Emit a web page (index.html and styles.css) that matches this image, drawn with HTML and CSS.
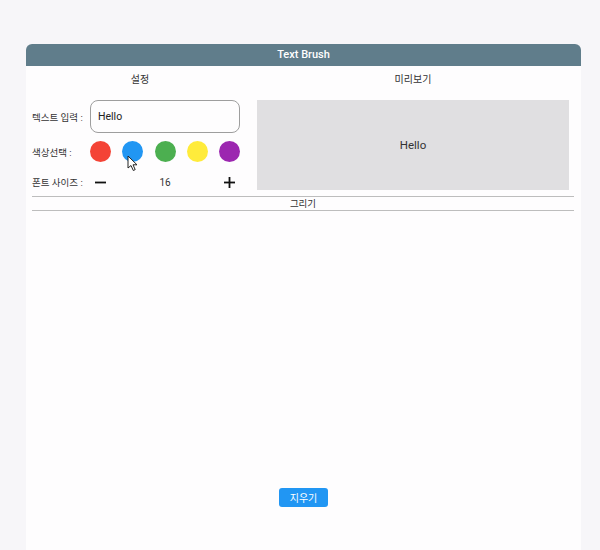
FILE: index.html
```html
<!DOCTYPE html>
<html lang="ko">
<head>
  <meta charset="UTF-8">
  <title>Text Brush</title>
  <link rel="stylesheet" href="styles.css">
</head>
<body>
  <div class="window">
    <header class="titlebar">Text Brush</header>
    <div class="top">
      <div class="col settings">
        <div class="col-title">설정</div>
        <div class="row input-row">
          <span class="label">텍스트 입력 :</span>
          <div class="text-input">Hello</div>
        </div>
        <div class="row color-row">
          <span class="label">색상선택 :</span>
          <div class="colors">
            <span class="dot red"></span>
            <span class="dot blue"></span>
            <span class="dot green"></span>
            <span class="dot yellow"></span>
            <span class="dot purple"></span>
          </div>
        </div>
        <div class="row size-row">
          <span class="label">폰트 사이즈 :</span>
          <div class="stepper">
            <span class="step-btn">
              <svg width="11" height="11" viewBox="0 0 11 11"><rect x="0" y="4.6" width="11" height="1.8" fill="#111"/></svg>
            </span>
            <span class="size-value">16</span>
            <span class="step-btn">
              <svg width="11" height="11" viewBox="0 0 11 11"><rect x="0" y="4.6" width="11" height="1.8" fill="#111"/><rect x="4.6" y="0" width="1.8" height="11" fill="#111"/></svg>
            </span>
          </div>
        </div>
        <svg class="cursor" width="12" height="17" viewBox="0 0 12 17">
          <path d="M1 1 L1 13 L4 10.5 L6.3 15.5 L8.2 14.6 L6 9.8 L10 9.8 Z" fill="#fff" stroke="#222" stroke-width="1" stroke-linejoin="round"/>
        </svg>
      </div>
      <div class="col preview-col">
        <div class="col-title">미리보기</div>
        <div class="preview">Hello</div>
      </div>
    </div>
    <div class="section-bar">그리기</div>
    <div class="canvas"></div>
    <div class="footer">
      <button class="clear-btn">지우기</button>
    </div>
  </div>
</body>
</html>
```
FILE: styles.css
```css
body {
  margin: 0;
  background: #f7f6f9;
  font-family: Roboto, "Noto Sans CJK KR", sans-serif;
  color: #222;
}
.window {
  width: 555px;
  height: 506px;
  margin: 44px 0 0 26px;
  background: #fefdfe;
  border-radius: 6px 6px 0 0;
  display: flex;
  flex-direction: column;
}
.titlebar {
  height: 22px;
  line-height: 22px;
  background: #607d8b;
  color: #fff;
  text-align: center;
  font-size: 11px;
  font-weight: 500;
  border-radius: 6px 6px 0 0;
}
.top {
  display: flex;
  gap: 9px;
  padding: 0 12px 0 6px;
}
.col-title {
  height: 24px;
  padding-top: 2px;
  line-height: 24px;
  text-align: center;
  font-size: 10px;
  color: #333;
  margin-bottom: 8px;
}
.settings {
  width: 216px;
  position: relative;
}
.preview-col {
  flex: 1;
}
.row {
  display: flex;
  align-items: center;
}
.label {
  width: 58px;
  font-size: 9.5px;
  color: #333;
}
.text-input {
  width: 150px;
  height: 33px;
  box-sizing: border-box;
  border: 1px solid #9e9e9e;
  border-radius: 8px;
  padding-left: 7px;
  line-height: 31px;
  font-size: 10.5px;
  color: #222;
}
.color-row {
  margin-top: 8px;
}
.colors {
  width: 150px;
  display: flex;
  justify-content: space-between;
}
.dot {
  width: 21px;
  height: 21px;
  border-radius: 50%;
}
.red { background: #f44336; }
.blue { background: #2196f3; }
.green { background: #4caf50; }
.yellow { background: #ffeb3b; }
.purple { background: #9c27b0; }
.size-row {
  margin-top: 10px;
  height: 20px;
}
.stepper {
  width: 150px;
  display: flex;
  justify-content: space-between;
  align-items: center;
}
.step-btn {
  width: 21px;
  display: flex;
  justify-content: center;
}
.size-value {
  font-size: 10px;
  color: #333;
}
.cursor {
  position: absolute;
  left: 95px;
  top: 89px;
}
.preview {
  height: 90px;
  background: #e0dfe1;
  display: flex;
  align-items: center;
  justify-content: center;
  font-size: 11.5px;
  color: #333;
}
.section-bar {
  margin: 4px 7px 0 6px;
  border-top: 1px solid #bdbdbd;
  border-bottom: 1px solid #bdbdbd;
  height: 13px;
  line-height: 13px;
  text-align: center;
  font-size: 9.5px;
  color: #333;
}
.canvas {
  flex: 1;
}
.footer {
  display: flex;
  justify-content: center;
  padding-bottom: 43px;
}
.clear-btn {
  width: 49px;
  height: 19px;
  border: none;
  border-radius: 3px;
  background: #2196f3;
  color: #fff;
  font-family: Roboto, "Noto Sans CJK KR", sans-serif;
  font-size: 10px;
  padding: 0;
}
```
